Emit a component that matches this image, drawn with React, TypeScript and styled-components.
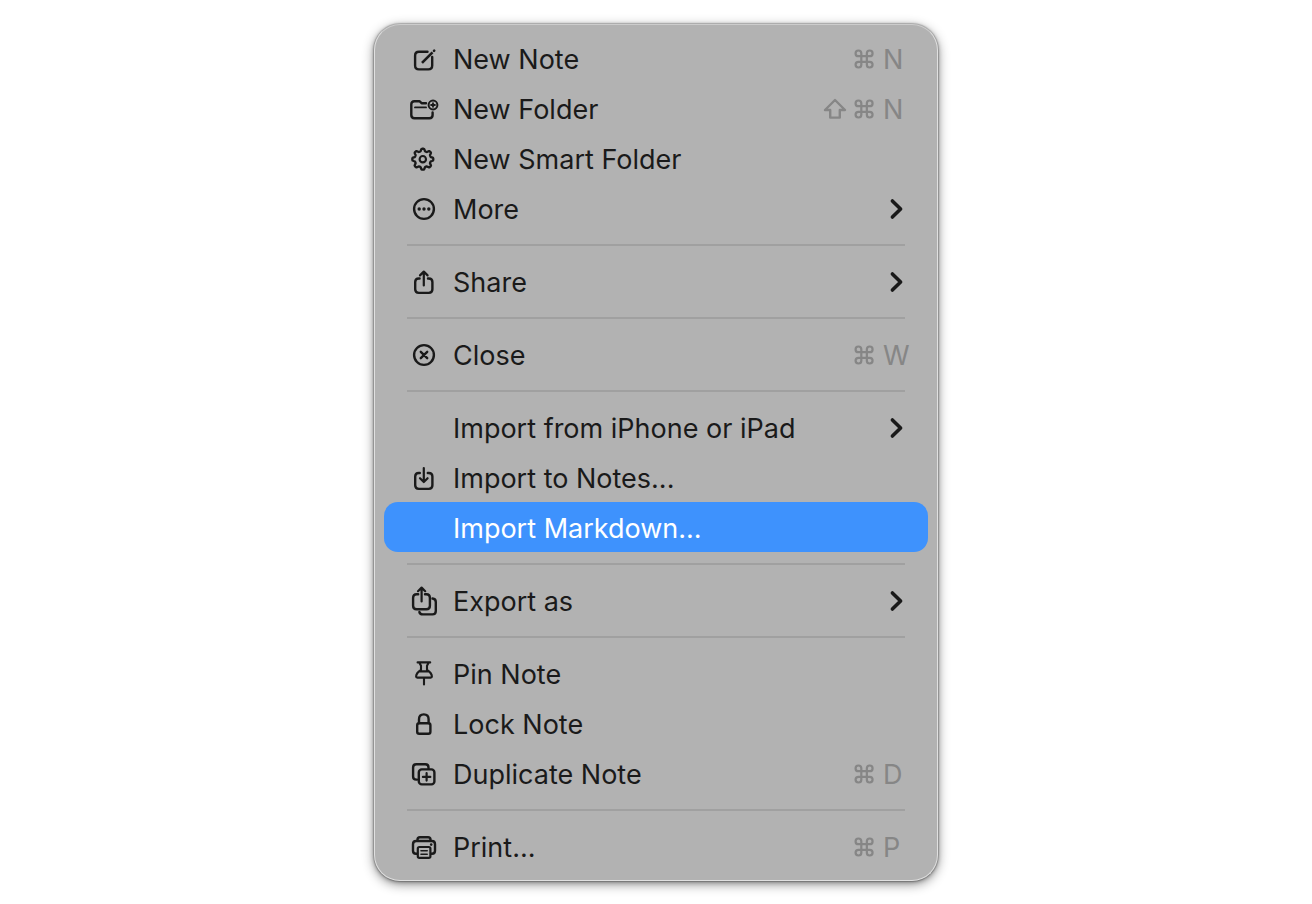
import React from 'react';
import styled, { createGlobalStyle } from 'styled-components';

const GlobalStyle = createGlobalStyle`
  *, *::before, *::after { box-sizing: border-box; }
  body { margin: 0; background: #fff; }
`;

const Page = styled.main`
  display: flex;
  justify-content: center;
  padding: 24px 16px;
  min-height: 100vh;
  background: #fff;
  color: #1a1a1a;
  font-family: Inter, 'Liberation Sans', sans-serif;
`;

const Menu = styled.div`
  align-self: flex-start;
  width: 100%;
  max-width: 564px;
  padding: 8px 9px 9px;
  border: 1px solid #e0e0e0;
  border-top-color: #cccccc;
  border-radius: 26px;
  background: #b2b2b2;
  box-shadow:
    0 0 1px 1px rgba(0, 0, 0, 0.18),
    0 1px 4px rgba(0, 0, 0, 0.3),
    0 3px 12px rgba(0, 0, 0, 0.45);
`;

const Item = styled.button<{ $active?: boolean }>`
  display: grid;
  grid-template-columns: 34px 1fr auto;
  align-items: center;
  column-gap: 12px;
  width: 100%;
  height: 50px;
  margin: 0;
  padding: 2px 23px 0;
  border: 0;
  border-radius: 14px;
  background: ${(p) => (p.$active ? '#3e92fd' : 'transparent')};
  color: ${(p) => (p.$active ? '#fff' : 'inherit')};
  font: inherit;
  font-size: 27px;
  line-height: 32px;
  text-align: left;
`;

const Label = styled.span`
  padding-top: 2px;
  white-space: nowrap;
`;

const Separator = styled.hr`
  height: 2px;
  margin: 11px 23px 10px;
  border: 0;
  background: #a0a0a0;
`;

const Icon = styled.svg`
  display: block;
  width: 34px;
  height: 34px;
  fill: none;
  stroke: currentColor;
  stroke-width: 2.4;
  stroke-linecap: round;
  stroke-linejoin: round;
`;

const Shortcut = styled.span`
  display: flex;
  align-items: center;
  gap: 6px;
  color: #868686;
`;

const Key = styled.kbd`
  width: 22px;
  padding-top: 2px;
  font: inherit;
  white-space: nowrap;
`;

const KeyGlyph = styled.svg`
  display: block;
  width: 24px;
  height: 24px;
  fill: none;
  stroke: currentColor;
  stroke-width: 2.4;
  stroke-linejoin: round;
`;

const Chevron = styled.svg`
  display: block;
  width: 16px;
  height: 24px;
  fill: none;
  stroke: currentColor;
  stroke-width: 3.6;
  stroke-linecap: round;
  stroke-linejoin: round;
`;

const gearPath = (() => {
  const points: string[] = [];
  const steps = 96;
  for (let i = 0; i < steps; i += 1) {
    const a = (i / steps) * Math.PI * 2;
    const wave = Math.tanh(2.2 * Math.cos(8 * a)) / Math.tanh(2.2);
    const r = 9.3 + 1.2 * wave;
    points.push(`${(15.8 + r * Math.sin(a)).toFixed(2)} ${(18.2 - r * Math.cos(a)).toFixed(2)}`);
  }
  return `M${points.join('L')}Z`;
})();

const icons = {
  compose: (
    <>
      <path d="M20.5 10.8H12Q8.1 10.8 8.1 14.7V24.5Q8.1 28.4 12 28.4H21.3Q25.2 28.4 25.2 24.5V16" />
      <path d="M15 21.8 25.5 11.3" strokeWidth="2.6" strokeLinecap="butt" />
      <path d="M27 9.8 27.2 9.6" strokeWidth="2.6" />
    </>
  ),
  folder: (
    <>
      <path d="M19 12.2H14.6L12.4 10.2H7.4Q4.3 10.2 4.3 13.3V24.1Q4.3 27.3 7.5 27.3H22.4Q25.6 27.3 25.6 24.1V21.5" />
      <path d="M8 16.4H19" strokeWidth="1.9" />
      <circle cx="26" cy="14" r="4.4" strokeWidth="2" />
      <path d="M26 11.4V16.6M23.4 14H28.6" strokeWidth="1.8" strokeLinecap="butt" />
    </>
  ),
  gear: (
    <>
      <path d={gearPath} strokeWidth="2.3" />
      <circle cx="15.8" cy="18.2" r="3.2" strokeWidth="2.1" />
    </>
  ),
  more: (
    <>
      <circle cx="17" cy="18" r="9.9" />
      <g fill="currentColor" stroke="none">
        <circle cx="12.2" cy="18" r="1.7" />
        <circle cx="17" cy="18" r="1.7" />
        <circle cx="21.8" cy="18" r="1.7" />
      </g>
    </>
  ),
  share: (
    <>
      <path d="M12.6 14.5H11.8Q8.2 14.5 8.2 18.1V25.3Q8.2 28.9 11.8 28.9H21.8Q25.4 28.9 25.4 25.3V18.1Q25.4 14.5 21.8 14.5H21" />
      <path d="M16.8 21.5V8M13 11.4 16.8 7.6 20.6 11.4" strokeWidth="2.2" />
    </>
  ),
  close: (
    <>
      <circle cx="17" cy="18" r="9.9" />
      <path d="M13.8 14.8 20.2 21.2M20.2 14.8 13.8 21.2" />
    </>
  ),
  import: (
    <>
      <path d="M12.8 13H11.8Q8.2 13 8.2 16.6V25.3Q8.2 28.9 11.8 28.9H21.8Q25.4 28.9 25.4 25.3V16.6Q25.4 13 21.8 13H20.8" />
      <path d="M16.8 8V21.6M13 18.2 16.8 22 20.6 18.2" strokeWidth="2.2" />
    </>
  ),
  exportAs: (
    <>
      <path d="M11.2 11.2H9.6Q6.1 11.2 6.1 14.7V22.8Q6.1 26.3 9.6 26.3H19.4Q22.9 26.3 22.9 22.8V14.7Q22.9 11.2 19.4 11.2H18" />
      <path d="M14.6 18.5V5M11 8.2 14.6 4.6 18.2 8.2" strokeWidth="2.2" />
      <path d="M25.5 15.5Q28.8 15.8 28.8 19V28Q28.8 31.4 25.4 31.4H15.8Q12.8 31.4 12.4 29" />
    </>
  ),
  pin: (
    <path
      d="M10.6 6.4H23.2M12.4 6.8 14 9.8V14Q9.1 17 9.1 20.5Q9.1 21.6 10.3 21.6H23.7Q24.9 21.6 24.9 20.5Q24.9 17 20 14V9.8L21.6 6.8M13 15.4H21M17 22V28.4"
      strokeWidth="2.1"
    />
  ),
  lock: (
    <>
      <rect x="10.2" y="17.2" width="13.2" height="10.6" rx="2" />
      <path d="M12 17V13.2Q12 8.4 16.8 8.4Q21.6 8.4 21.6 13.2V17" />
    </>
  ),
  duplicate: (
    <>
      <path d="M10 23.6H9.3Q6.1 23.6 6.1 20.4V11.4Q6.1 8.2 9.3 8.2H18.3Q21.5 8.2 21.5 11.4V12" />
      <rect x="11.8" y="13.4" width="15.6" height="15" rx="3" />
      <path d="M19.6 17.2V24.6M15.9 20.9H23.3" strokeWidth="2.2" />
    </>
  ),
  print: (
    <>
      <path d="M10 24.8H9Q6 24.8 6 21.8V15.2Q6 12 9.2 12H24.8Q28 12 28 15.2V21.8Q28 24.8 25 24.8H24" />
      <path d="M10.5 11.8V10.7Q10.5 8.2 13 8.2H21Q23.5 8.2 23.5 10.7V11.8" />
      <rect x="10.8" y="18" width="12.6" height="10.8" rx="1.6" strokeWidth="2.2" />
      <path d="M14 21.8H20.2M14 25.2H20.2" strokeWidth="1.6" />
      <circle cx="24.2" cy="15.6" r="1.3" fill="currentColor" stroke="none" />
    </>
  ),
};

type IconName = keyof typeof icons;

const CommandGlyph = () => (
  <KeyGlyph viewBox="0 -1 26 26" role="img" aria-label="Command">
    <path d="M9 9V5.8A3.1 3.1 0 1 0 5.9 9H18.1A3.1 3.1 0 1 0 15 5.8V18.2A3.1 3.1 0 1 0 18.1 15H5.9A3.1 3.1 0 1 0 9 18.2Z" />
  </KeyGlyph>
);

const ShiftGlyph = () => (
  <KeyGlyph viewBox="0 0 24 24" role="img" aria-label="Shift">
    <path d="M12 3 22 13H16.8V20.6H7.2V13H2Z" />
  </KeyGlyph>
);

interface Entry {
  label: string;
  icon?: IconName;
  shortcut?: string;
  shift?: boolean;
  submenu?: boolean;
  active?: boolean;
}

const groups: Entry[][] = [
  [
    { label: 'New Note', icon: 'compose', shortcut: 'N' },
    { label: 'New Folder', icon: 'folder', shortcut: 'N', shift: true },
    { label: 'New Smart Folder', icon: 'gear' },
    { label: 'More', icon: 'more', submenu: true },
  ],
  [{ label: 'Share', icon: 'share', submenu: true }],
  [{ label: 'Close', icon: 'close', shortcut: 'W' }],
  [
    { label: 'Import from iPhone or iPad', submenu: true },
    { label: 'Import to Notes...', icon: 'import' },
    { label: 'Import Markdown...', active: true },
  ],
  [{ label: 'Export as', icon: 'exportAs', submenu: true }],
  [
    { label: 'Pin Note', icon: 'pin' },
    { label: 'Lock Note', icon: 'lock' },
    { label: 'Duplicate Note', icon: 'duplicate', shortcut: 'D' },
  ],
  [{ label: 'Print...', icon: 'print', shortcut: 'P' }],
];

const MenuItem = ({ label, icon, shortcut, shift, submenu, active }: Entry) => (
  <Item type="button" role="menuitem" aria-haspopup={submenu ? 'menu' : undefined} $active={active}>
    <Icon viewBox="0 1 34 34" aria-hidden="true">
      {icon && icons[icon]}
    </Icon>
    <Label>{label}</Label>
    {shortcut && (
      <Shortcut>
        {shift && <ShiftGlyph />}
        <CommandGlyph />
        <Key>{shortcut}</Key>
      </Shortcut>
    )}
    {submenu && (
      <Chevron viewBox="0 0 16 24" aria-hidden="true">
        <path d="M3.4 4 11.6 12 3.4 20" />
      </Chevron>
    )}
  </Item>
);

export default function App() {
  return (
    <>
      <GlobalStyle />
      <Page>
        <Menu role="menu" aria-label="File">
          {groups.map((group, index) => (
            <React.Fragment key={group[0].label}>
              {index > 0 && <Separator />}
              {group.map((entry) => (
                <MenuItem key={entry.label} {...entry} />
              ))}
            </React.Fragment>
          ))}
        </Menu>
      </Page>
    </>
  );
}
